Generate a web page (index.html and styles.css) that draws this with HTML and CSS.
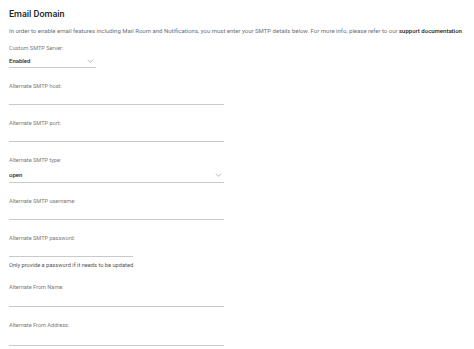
FILE: index.html
```html
<!DOCTYPE html>
<html>
	<head>
		<meta charset="utf-8">
		<title>Email Domain</title>
		<link rel="stylesheet" href="styles.css">
	</head>
	<body>
		<div class="panel">
			<h2 class="title">Email Domain</h2>
			<p class="intro">In order to enable email features including Mail Room and Notifications, you must enter your SMTP details below. For more info, please refer to our <a class="link" href="#">support documentation</a>.</p>

			<div class="field short">
				<label class="label">Custom SMTP Server:</label>
				<div class="select">
					<span class="value">Enabled</span>
					<svg class="chev" viewBox="0 0 10 6" width="7" height="4"><path d="M1 1l4 4 4-4" fill="none" stroke="#999" stroke-width="1"/></svg>
				</div>
			</div>

			<div class="field">
				<label class="label">Alternate SMTP host:</label>
				<div class="input"></div>
			</div>

			<div class="field">
				<label class="label">Alternate SMTP port:</label>
				<div class="input"></div>
			</div>

			<div class="field">
				<label class="label">Alternate SMTP type:</label>
				<div class="select wide">
					<span class="value">open</span>
					<svg class="chev" viewBox="0 0 10 6" width="7" height="4"><path d="M1 1l4 4 4-4" fill="none" stroke="#999" stroke-width="1"/></svg>
				</div>
			</div>

			<div class="field">
				<label class="label">Alternate SMTP username:</label>
				<div class="input"></div>
			</div>

			<div class="field medium">
				<label class="label">Alternate SMTP password:</label>
				<div class="input"></div>
				<div class="hint">Only provide a password if it needs to be updated.</div>
			</div>

			<div class="field">
				<label class="label">Alternate From Name:</label>
				<div class="input tall"></div>
			</div>

			<div class="field">
				<label class="label">Alternate From Address:</label>
				<div class="input taller"></div>
			</div>
		</div>
	</body>
</html>
```
FILE: styles.css
```css
*{
	margin: 0;
	padding: 0;
	box-sizing: border-box;
}
body{
	background: #ffffff;
	font-family: Roboto, "Liberation Sans", sans-serif;
	color: #333333;
}
.panel{
	padding: 8px 9px 0 9px;
	display: flex;
	flex-direction: column;
}
.title{
	font-size: 9px;
	font-weight: 500;
	color: #222222;
	line-height: 12px;
}
.intro{
	margin-top: 7px;
	font-size: 6px;
	line-height: 8px;
	color: #6b6f7a;
	white-space: nowrap;
}
.link{
	color: #222222;
	font-weight: 500;
	text-decoration: none;
}
.field{
	width: 215px;
	margin-top: 9px;
	display: flex;
	flex-direction: column;
}
.field + .field{
	margin-top: 14px;
}
.field.short{
	width: 87px;
}
.field.medium{
	width: 124px;
}
.label{
	font-size: 5.6px;
	line-height: 8px;
	color: #7a7a7a;
}
.select{
	margin-top: 2px;
	height: 14px;
	border-bottom: 1px solid #c9c9c9;
	display: flex;
	align-items: center;
	justify-content: space-between;
	padding-right: 2px;
}
.select.wide{
	margin-top: 3px;
	height: 16px;
}
.value{
	font-size: 6px;
	font-weight: 500;
	color: #2a2a2a;
}
.input{
	height: 15px;
	border-bottom: 1px solid #c9c9c9;
}
.input.tall{
	height: 16px;
}
.input.taller{
	height: 17px;
}
.hint{
	margin-top: 5px;
	font-size: 5.7px;
	line-height: 7px;
	color: #555555;
	white-space: nowrap;
}
```
